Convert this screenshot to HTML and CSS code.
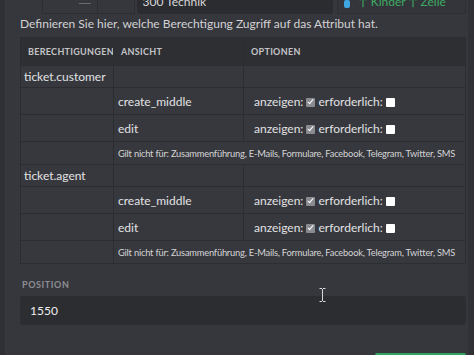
FILE: index.html
```html
<!DOCTYPE html>
<html lang="de">
<head>
<meta charset="utf-8">
<link rel="stylesheet" href="styles.css">
</head>
<body>
<div class="frame">
  <div class="main">
    <div class="toprow">
      <div class="tb tb1"><span class="dash"></span></div>
      <div class="tb tb2"></div>
      <div class="tinput">300 Technik</div>
      <div class="tpanel"><span class="bluei"></span><span class="green">↑ Kinder ↑ Zeile</span></div>
    </div>
    <p class="help">Definieren Sie hier, welche Berechtigung Zugriff auf das Attribut hat.</p>
    <table class="perm">
      <colgroup><col class="c1"><col class="c2"><col class="c3"></colgroup>
      <thead>
        <tr><th>Berechtigungen</th><th>Ansicht</th><th>Optionen</th></tr>
      </thead>
      <tbody>
        <tr class="grp"><td>ticket.customer</td><td></td><td></td></tr>
        <tr class="opt"><td></td><td>create_middle</td><td>anzeigen: <span class="cb on"></span> erforderlich: <span class="cb"></span></td></tr>
        <tr class="opt"><td></td><td>edit</td><td>anzeigen: <span class="cb on"></span> erforderlich: <span class="cb"></span></td></tr>
        <tr class="note"><td></td><td colspan="2">Gilt nicht für: Zusammenführung, E-Mails, Formulare, Facebook, Telegram, Twitter, SMS</td></tr>
        <tr class="grp"><td>ticket.agent</td><td></td><td></td></tr>
        <tr class="opt"><td></td><td>create_middle</td><td>anzeigen: <span class="cb on"></span> erforderlich: <span class="cb"></span></td></tr>
        <tr class="opt"><td></td><td>edit</td><td>anzeigen: <span class="cb on"></span> erforderlich: <span class="cb"></span></td></tr>
        <tr class="note"><td></td><td colspan="2">Gilt nicht für: Zusammenführung, E-Mails, Formulare, Facebook, Telegram, Twitter, SMS</td></tr>
      </tbody>
    </table>
    <div class="field">
      <div class="label">Position</div>
      <div class="input">1550
        <svg class="ibeam" width="7" height="14" viewBox="0 0 7 14"><path d="M0.5 0.5h2.5M4 0.5h2.5M3.5 1v12M0.5 13.5h2.5M4 13.5h2.5" stroke="#d8d8d8" stroke-width="1" fill="none"/></svg>
      </div>
    </div>
    <div class="actions"><div class="btn"></div></div>
  </div>
</div>
</body>
</html>
```
FILE: styles.css
```css
html, body { margin: 0; padding: 0; }
body {
  background: #36373c;
  font-family: Lato, "Noto Sans", sans-serif;
  color: #d6d6d8;
  width: 474px;
  height: 355px;
  overflow: hidden;
}
.frame {
  height: 355px;
  border-left: 5px solid #2f3034;
  border-right: 6px solid #303135;
  box-sizing: border-box;
  width: 474px;
  overflow: hidden;
}
.main {
  padding: 0 2px 0 15px;
}
.toprow {
  display: flex;
  height: 26px;
  margin-top: -12px;
  align-items: stretch;
}
.tb {
  box-sizing: border-box;
  border: 1px solid #2c2d31;
  background: #36373c;
  position: relative;
}
.tb1 { margin-left: 22px; width: 56px; }
.tb2 { width: 37px; border-left: none; }
.dash {
  position: absolute;
  left: 36px; top: 14px;
  width: 12px; height: 1px; background: #6a6b70;
}
.tinput {
  margin-left: 2px;
  width: 197px;
  background: #2b2c30;
  border-radius: 3px;
  font-size: 12px;
  line-height: 14px;
  color: #d8d8d8;
  padding: 7px 0 0 6px;
  box-sizing: border-box;
}
.tpanel {
  margin-left: 4px;
  width: 130px;
  box-sizing: border-box;
  border: 1px solid #2d2e32;
  background: #34353a;
  display: flex;
  align-items: flex-start;
  padding: 6px 0 0 6px;
  gap: 9px;
  font-size: 12px;
  line-height: 14px;
}
.bluei { width: 6px; height: 8px; background: #3ea6e0; border-radius: 2px; margin-top: 5px; }
.green { color: #3dab63; }
.help {
  margin: 2px 0 0 0;
  font-size: 12px;
  line-height: 16px;
  color: #d2d2d4;
}
.perm {
  margin-top: 5px;
  width: 446px;
  table-layout: fixed;
  border-collapse: collapse;
  font-size: 12px;
}
col.c1 { width: 93px; }
col.c2 { width: 130px; }
.perm th, .perm td {
  border: 1px solid #2c2d31;
  text-align: left;
  padding: 0 0 0 4px;
  white-space: nowrap;
  overflow: hidden;
}
.perm th {
  background: #2e2f33;
  font-size: 9px;
  font-weight: 700;
  text-transform: uppercase;
  letter-spacing: 0.3px;
  color: #c4c4c7;
  height: 27px;
  padding-left: 7px;
}
.perm td { background: #37383d; color: #e2e2e4; }
.perm tr.grp td { height: 21px; padding-left: 3px; }
.perm tr.opt td { height: 26px; }
.perm tr.note td { height: 22px; font-size: 9.3px; color: #d4d4d6; letter-spacing: -0.2px; }
.perm tr.opt td:last-child { padding-left: 10px; }
.cb {
  display: inline-block;
  width: 9px; height: 9px;
  background: #fff;
  vertical-align: -1px;
  border-radius: 1px;
  position: relative;
}
.cb.on { background: #8a8b90; }
.cb.on::after {
  content: "";
  position: absolute;
  left: 3px; top: 0px;
  width: 2px; height: 5px;
  border: solid #fff;
  border-width: 0 1.5px 1.5px 0;
  transform: rotate(40deg);
}
.field { margin: 15px 0 0 0; }
.label {
  font-size: 9px;
  font-weight: 700;
  letter-spacing: 0.6px;
  text-transform: uppercase;
  color: #8d8e93;
  padding-left: 2px;
  line-height: 12px;
}
.input {
  margin-top: 5px;
  height: 29px;
  background: #2c2d31;
  border-radius: 3px;
  font-size: 12px;
  color: #eeeeef;
  padding-left: 10px;
  line-height: 29px;
  position: relative;
}
.ibeam { position: absolute; left: 299px; top: -8px; }
.actions { display: flex; justify-content: flex-end; margin-top: 28px; }
.btn { width: 91px; height: 12px; background: #2fa45c; border-radius: 2px; }
```
